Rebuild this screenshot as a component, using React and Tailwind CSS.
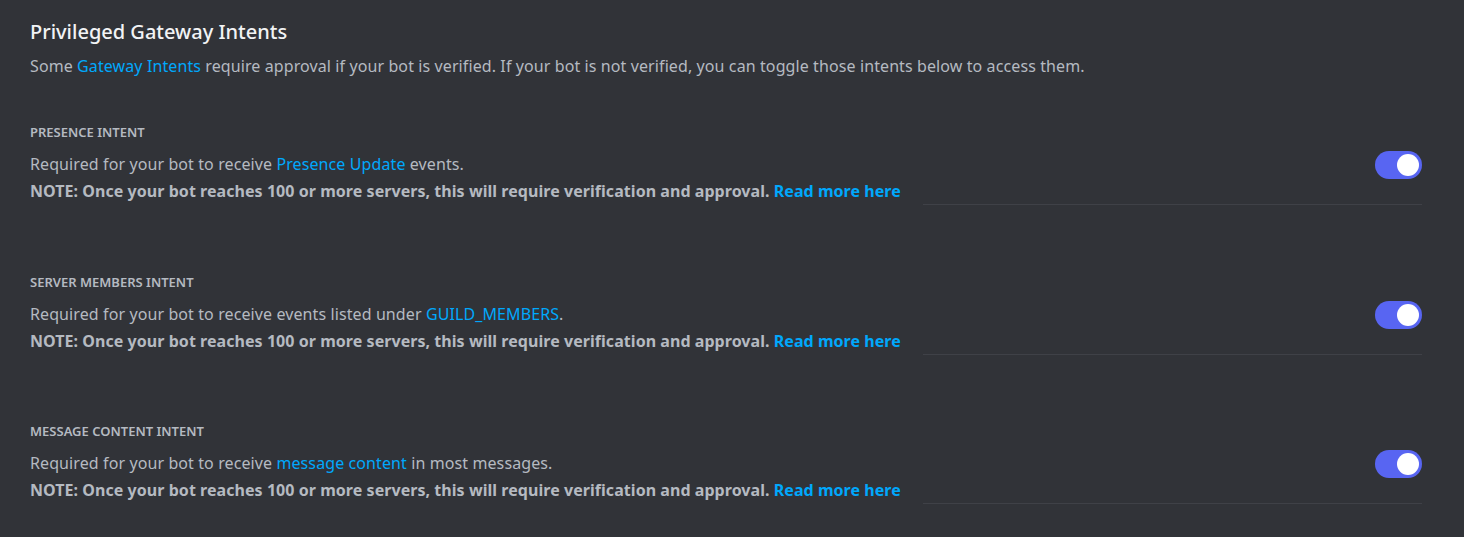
import React, { useState } from "react";

const intents = [
  {
    label: "PRESENCE INTENT",
    before: "Required for your bot to receive ",
    link: "Presence Update",
    after: " events.",
  },
  {
    label: "SERVER MEMBERS INTENT",
    before: "Required for your bot to receive events listed under ",
    link: "GUILD_MEMBERS",
    after: ".",
  },
  {
    label: "MESSAGE CONTENT INTENT",
    before: "Required for your bot to receive ",
    link: "message content",
    after: " in most messages.",
  },
];

function Toggle({ on, onClick }) {
  return (
    <button
      onClick={onClick}
      className={
        "relative w-[47px] h-[28px] rounded-full shrink-0 " +
        (on ? "bg-[#5865f2]" : "bg-[#80848e]")
      }
    >
      <span
        className={
          "absolute top-[3px] w-[22px] h-[22px] rounded-full bg-white " +
          (on ? "right-[3px]" : "left-[3px]")
        }
      />
    </button>
  );
}

function IntentRow({ data }) {
  const [on, setOn] = useState(true);
  return (
    <div className="flex flex-col">
      <h3 className="text-[13px] font-semibold text-[#b5bac1] leading-4 mb-[14px]">
        {data.label}
      </h3>
      <div className="flex items-start">
        <div className="flex-1">
          <p className="text-[16px] leading-[20px] text-[#b5bac1] tracking-[0.1px]">
            {data.before}
            <span className="text-[#00a8fc]">{data.link}</span>
            {data.after}
          </p>
          <p className="text-[16px] leading-[20px] font-bold text-[#b5bac1] mt-[7px] tracking-[0.05px]">
            NOTE: Once your bot reaches 100 or more servers, this will require verification and approval.{" "}
            <span className="text-[#00a8fc]">Read more here</span>
          </p>
        </div>
        <div className="mt-[-3px]">
          <Toggle on={on} onClick={() => setOn(!on)} />
        </div>
      </div>
      <div className="ml-auto w-[499px] h-px bg-[#3f4147] mt-[3px]" />
    </div>
  );
}

export default function App() {
  return (
    <div
      className="min-h-screen bg-[#313338] pl-[30px] pr-[42px] pt-[20px]"
      style={{ fontFamily: '"Noto Sans", "Open Sans", sans-serif' }}
    >
      <h2 className="text-[20px] leading-[24px] font-medium text-[#f2f3f5]">
        Privileged Gateway Intents
      </h2>
      <p className="text-[16px] leading-[20px] text-[#b5bac1] mt-[12px] tracking-[0.1px]">
        Some <span className="text-[#00a8fc]">Gateway Intents</span> require approval if your bot is verified. If your bot is not verified, you can toggle those intents below to access them.
      </p>
      <div className="flex flex-col gap-[68.5px] mt-[48px]">
        {intents.map((it) => (
          <IntentRow key={it.label} data={it} />
        ))}
      </div>
    </div>
  );
}
